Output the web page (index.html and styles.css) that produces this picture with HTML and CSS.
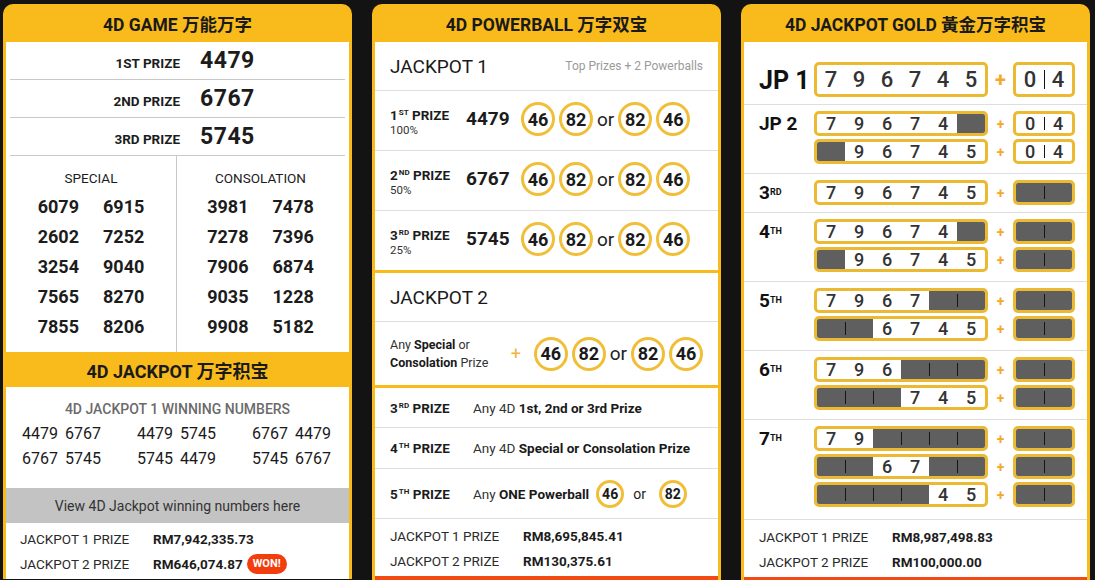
FILE: index.html
```html
<!DOCTYPE html>
<html>
<head>
<meta charset="utf-8">
<link rel="stylesheet" href="styles.css">
</head>
<body>
<div class="wrap">

  <section class="card">
    <h2 class="card-head">4D GAME 万能万字</h2>
    <div class="top-prizes">
      <div class="tp-row"><span class="tp-label">1ST PRIZE</span><span class="tp-num">4479</span></div>
      <div class="tp-row"><span class="tp-label">2ND PRIZE</span><span class="tp-num">6767</span></div>
      <div class="tp-row"><span class="tp-label">3RD PRIZE</span><span class="tp-num">5745</span></div>
    </div>
    <div class="sc">
      <div class="sc-col">
        <div class="sc-title">SPECIAL</div>
        <div class="sc-nums">
          <span>6079</span><span>6915</span>
          <span>2602</span><span>7252</span>
          <span>3254</span><span>9040</span>
          <span>7565</span><span>8270</span>
          <span>7855</span><span>8206</span>
        </div>
      </div>
      <div class="sc-col">
        <div class="sc-title">CONSOLATION</div>
        <div class="sc-nums">
          <span>3981</span><span>7478</span>
          <span>7278</span><span>7396</span>
          <span>7906</span><span>6874</span>
          <span>9035</span><span>1228</span>
          <span>9908</span><span>5182</span>
        </div>
      </div>
    </div>
    <h2 class="card-head sub">4D JACKPOT 万字积宝</h2>
    <div class="jp-win">
      <div class="jp-win-title">4D JACKPOT 1 WINNING NUMBERS</div>
      <div class="jp-grid">
        <span class="pair"><span>4479</span><span>6767</span></span>
        <span class="pair"><span>4479</span><span>5745</span></span>
        <span class="pair"><span>6767</span><span>4479</span></span>
        <span class="pair"><span>6767</span><span>5745</span></span>
        <span class="pair"><span>5745</span><span>4479</span></span>
        <span class="pair"><span>5745</span><span>6767</span></span>
      </div>
    </div>
    <div class="view-bar">View 4D Jackpot winning numbers here</div>
    <div class="jpp left">
      <div class="jpp-row"><span class="jpp-label">JACKPOT 1 PRIZE</span><span class="jpp-val">RM7,942,335.73</span></div>
      <div class="jpp-row"><span class="jpp-label">JACKPOT 2 PRIZE</span><span class="jpp-val">RM646,074.87</span><span class="won">WON!</span></div>
    </div>
  </section>

  <section class="card">
    <h2 class="card-head">4D POWERBALL 万字双宝</h2>
    <div class="stack">
      <div class="pb-sec">
        <div class="pb-title"><h3>JACKPOT 1</h3><small>Top Prizes + 2 Powerballs</small></div>
        <div class="pb-row">
          <div class="pb-label">1<sup>ST</sup> PRIZE<small>100%</small></div>
          <div class="pb-num">4479</div>
          <div class="balls"><span class="ball">46</span><span class="ball">82</span><span class="or">or</span><span class="ball">82</span><span class="ball">46</span></div>
        </div>
        <div class="pb-row">
          <div class="pb-label">2<sup>ND</sup> PRIZE<small>50%</small></div>
          <div class="pb-num">6767</div>
          <div class="balls"><span class="ball">46</span><span class="ball">82</span><span class="or">or</span><span class="ball">82</span><span class="ball">46</span></div>
        </div>
        <div class="pb-row last">
          <div class="pb-label">3<sup>RD</sup> PRIZE<small>25%</small></div>
          <div class="pb-num">5745</div>
          <div class="balls"><span class="ball">46</span><span class="ball">82</span><span class="or">or</span><span class="ball">82</span><span class="ball">46</span></div>
        </div>
      </div>
      <div class="pb-sec">
        <div class="pb-title"><h3>JACKPOT 2</h3></div>
        <div class="pb-row any">
          <div class="any-text">Any <b>Special</b> or<br><b>Consolation</b> Prize</div>
          <span class="pb-plus">+</span>
          <div class="balls"><span class="ball">46</span><span class="ball">82</span><span class="or">or</span><span class="ball">82</span><span class="ball">46</span></div>
        </div>
      </div>
      <div class="pb-sec">
        <div class="rule-row"><span class="rule-label">3<sup>RD</sup> PRIZE</span><span class="rule-text">Any 4D <b>1st, 2nd or 3rd Prize</b></span></div>
        <div class="rule-row r4"><span class="rule-label">4<sup>TH</sup> PRIZE</span><span class="rule-text">Any 4D <b>Special or Consolation Prize</b></span></div>
        <div class="rule-row r5"><span class="rule-label">5<sup>TH</sup> PRIZE</span><span class="rule-text">Any <b>ONE Powerball</b></span><span class="ball sm">46</span><span class="or sm">or</span><span class="ball sm">82</span></div>
        <div class="jpp">
          <div class="jpp-row"><span class="jpp-label">JACKPOT 1 PRIZE</span><span class="jpp-val">RM8,695,845.41</span></div>
          <div class="jpp-row"><span class="jpp-label">JACKPOT 2 PRIZE</span><span class="jpp-val">RM130,375.61</span></div>
        </div>
        <div class="red-bar"></div>
      </div>
    </div>
  </section>

  <section class="card">
    <h2 class="card-head">4D JACKPOT GOLD 黃金万字积宝</h2>
    <div class="gold">
      <div class="gr-row big">
        <span class="gr-label">JP 1</span>
        <div class="dbox"><span>7</span><span>9</span><span>6</span><span>7</span><span>4</span><span>5</span></div>
        <span class="plus">+</span>
        <div class="pbox"><span>0</span><span>4</span></div>
      </div>
      <div class="gr-row">
        <span class="gr-label jp2">JP 2</span>
        <div class="dbox"><span>7</span><span>9</span><span>6</span><span>7</span><span>4</span><span class="g"></span></div>
        <span class="plus">+</span>
        <div class="pbox"><span>0</span><span>4</span></div>
        <div class="dbox"><span class="g"></span><span>9</span><span>6</span><span>7</span><span>4</span><span>5</span></div>
        <span class="plus">+</span>
        <div class="pbox"><span>0</span><span>4</span></div>
      </div>
      <div class="gr-row one">
        <span class="gr-label">3<sup>RD</sup></span>
        <div class="dbox"><span>7</span><span>9</span><span>6</span><span>7</span><span>4</span><span>5</span></div>
        <span class="plus">+</span>
        <div class="pbox"><span class="g"></span><span class="g"></span></div>
      </div>
      <div class="gr-row">
        <span class="gr-label">4<sup>TH</sup></span>
        <div class="dbox"><span>7</span><span>9</span><span>6</span><span>7</span><span>4</span><span class="g"></span></div>
        <span class="plus">+</span>
        <div class="pbox"><span class="g"></span><span class="g"></span></div>
        <div class="dbox"><span class="g"></span><span>9</span><span>6</span><span>7</span><span>4</span><span>5</span></div>
        <span class="plus">+</span>
        <div class="pbox"><span class="g"></span><span class="g"></span></div>
      </div>
      <div class="gr-row">
        <span class="gr-label">5<sup>TH</sup></span>
        <div class="dbox"><span>7</span><span>9</span><span>6</span><span>7</span><span class="g"></span><span class="g"></span></div>
        <span class="plus">+</span>
        <div class="pbox"><span class="g"></span><span class="g"></span></div>
        <div class="dbox"><span class="g"></span><span class="g"></span><span>6</span><span>7</span><span>4</span><span>5</span></div>
        <span class="plus">+</span>
        <div class="pbox"><span class="g"></span><span class="g"></span></div>
      </div>
      <div class="gr-row">
        <span class="gr-label">6<sup>TH</sup></span>
        <div class="dbox"><span>7</span><span>9</span><span>6</span><span class="g"></span><span class="g"></span><span class="g"></span></div>
        <span class="plus">+</span>
        <div class="pbox"><span class="g"></span><span class="g"></span></div>
        <div class="dbox"><span class="g"></span><span class="g"></span><span class="g"></span><span>7</span><span>4</span><span>5</span></div>
        <span class="plus">+</span>
        <div class="pbox"><span class="g"></span><span class="g"></span></div>
      </div>
      <div class="gr-row three">
        <span class="gr-label">7<sup>TH</sup></span>
        <div class="dbox"><span>7</span><span>9</span><span class="g"></span><span class="g"></span><span class="g"></span><span class="g"></span></div>
        <span class="plus">+</span>
        <div class="pbox"><span class="g"></span><span class="g"></span></div>
        <div class="dbox"><span class="g"></span><span class="g"></span><span>6</span><span>7</span><span class="g"></span><span class="g"></span></div>
        <span class="plus">+</span>
        <div class="pbox"><span class="g"></span><span class="g"></span></div>
        <div class="dbox"><span class="g"></span><span class="g"></span><span class="g"></span><span class="g"></span><span>4</span><span>5</span></div>
        <span class="plus">+</span>
        <div class="pbox"><span class="g"></span><span class="g"></span></div>
      </div>
      <div class="jpp">
        <div class="jpp-row"><span class="jpp-label">JACKPOT 1 PRIZE</span><span class="jpp-val">RM8,987,498.83</span></div>
        <div class="jpp-row"><span class="jpp-label">JACKPOT 2 PRIZE</span><span class="jpp-val">RM100,000.00</span></div>
      </div>
      <div class="red-bar"></div>
    </div>
  </section>

</div>
</body>
</html>
```

FILE: styles.css
```css
* { box-sizing: border-box; margin: 0; padding: 0; }
html, body { background: #131313; }
body {
  font-family: Roboto, "Noto Sans CJK SC", sans-serif;
  color: #1c1c1c;
  height: 580px;
  overflow: hidden;
}
.wrap {
  display: flex;
  gap: 20px;
  padding: 4px 0 0 3px;
  align-items: flex-start;
}
.card {
  width: 349px;
  flex-shrink: 0;
  background: #f9bb1c;
  border-radius: 10px 10px 0 0;
  padding: 0 3px;
  display: flex;
  flex-direction: column;
}
.card-head {
  height: 38px;
  display: flex;
  align-items: center;
  justify-content: center;
  font-size: 17.5px;
  font-weight: 700;
  color: #1a1a1a;
}
.card-head.sub { height: 35px; font-size: 18px; }

sup {
  font-size: 8px;
  line-height: 0;
  vertical-align: 5px;
  margin-left: 1px;
}

/* ---------- left card ---------- */
.top-prizes { background: #fff; padding: 0 4px; }
.tp-row {
  height: 38px;
  display: grid;
  grid-template-columns: 170px 1fr;
  column-gap: 20px;
  align-items: center;
  border-bottom: 1px solid #c9c9c9;
}
.tp-label { text-align: right; font-size: 13.5px; font-weight: 700; padding-top: 4px; }
.tp-num { font-size: 23px; font-weight: 700; letter-spacing: 0.5px; }

.sc {
  background: #fff;
  height: 196px;
  display: grid;
  grid-template-columns: 170px 1fr;
}
.sc-col + .sc-col { border-left: 1px solid #c9c9c9; padding-right: 5px; }
.sc-title { text-align: center; font-size: 13.5px; line-height: 20px; padding-top: 12px; }
.sc-nums {
  margin-top: 3px;
  display: grid;
  grid-template-columns: auto auto;
  justify-content: center;
  column-gap: 24px;
  grid-auto-rows: 30px;
  align-items: center;
  font-size: 18px;
  font-weight: 700;
}

.jp-win { background: #fff; padding: 12px 0 17px 16px; }
.jp-win-title {
  text-align: center;
  margin-left: -16px;
  font-size: 14px;
  font-weight: 500;
  line-height: 20px;
  color: #6b6b6b;
  margin-bottom: 2px;
}
.jp-grid {
  display: grid;
  grid-template-columns: 115px 115px 115px;
  grid-auto-rows: 25px;
  align-items: center;
  font-size: 16px;
  color: #1a1a1a;
}
.pair { display: flex; gap: 7px; }

.view-bar {
  height: 35px;
  background: #c3c3c3;
  display: flex;
  align-items: center;
  justify-content: center;
  font-size: 14px;
  color: #333;
}

.jpp { background: #fff; padding: 4px 15px 3px; }
.jpp.left { padding: 3px 14px 3px; }
.jpp-row { height: 25px; display: flex; align-items: center; font-size: 13.5px; }
.jpp-label { width: 133px; color: #2a2a2a; }
.jpp-val { font-weight: 700; }
.won {
  margin-left: 4px;
  background: #f23d0c;
  color: #fff;
  font-weight: 700;
  font-size: 11px;
  height: 20px;
  padding: 0 6px;
  border-radius: 10px;
  display: flex;
  align-items: center;
}

/* ---------- middle card ---------- */
.stack { display: flex; flex-direction: column; gap: 3px; }
.pb-sec { background: #fff; }
.pb-title {
  height: 49px;
  padding: 0 15px;
  display: flex;
  align-items: center;
  justify-content: space-between;
  border-bottom: 1px solid #dedede;
}
.pb-title h3 { font-size: 19px; font-weight: 400; color: #1a1a1a; }
.pb-title small { font-size: 12px; color: #9a9a9a; }
.pb-row {
  height: 60px;
  padding: 0 15px 3px;
  display: flex;
  align-items: center;
  border-bottom: 1px solid #dedede;
}
.pb-row.last { height: 59px; border-bottom: 0; }
.pb-label { width: 76px; font-size: 13.5px; font-weight: 700; line-height: 15px; padding-top: 6px; }
.pb-label small { display: block; font-size: 11.5px; font-weight: 400; line-height: 14px; color: #333; }
.pb-num { width: 55px; font-size: 19px; font-weight: 700; padding-bottom: 2px; }
.balls { display: flex; align-items: center; gap: 4px; }
.ball {
  width: 34px;
  height: 34px;
  border: 3px solid #f0be37;
  border-radius: 50%;
  display: flex;
  align-items: center;
  justify-content: center;
  font-size: 18px;
  font-weight: 700;
  color: #1a1a1a;
}
.or { font-size: 19px; color: #222; }
.pb-row.any { height: 63px; padding-bottom: 0; border-bottom: 0; }
.any-text { width: 116px; font-size: 12.5px; line-height: 18px; color: #333; }
.any-text b { color: #1a1a1a; }
.pb-plus { width: 20px; margin-right: 8px; text-align: center; color: #f4b43a; font-size: 18px; }

.rule-row {
  height: 40px;
  padding: 0 15px;
  display: flex;
  align-items: center;
  border-bottom: 1px solid #dedede;
}
.rule-row.r4 { height: 41px; }
.rule-row.r5 { height: 50px; }
.rule-label { width: 83px; font-size: 13.5px; font-weight: 700; }
.rule-text { font-size: 13.5px; color: #333; }
.rule-text b { color: #1a1a1a; }
.ball.sm { width: 28px; height: 28px; font-size: 14px; margin-left: 7px; }
.or.sm { font-size: 14px; margin: 0 6px 0 9px; }

.red-bar { height: 24px; background: #f24a12; }

/* ---------- right card ---------- */
.gold { background: #fff; }
.gr-row {
  display: grid;
  grid-template-columns: 55px 174px 25px 62px;
  grid-auto-rows: 25px;
  row-gap: 3px;
  padding: 6px 0 9px 15px;
  border-bottom: 1px solid #dedede;
}
.gr-row.one { padding-bottom: 7px; }
.gr-row.three { padding-bottom: 12px; }
.gr-row.big { grid-auto-rows: 35px; padding: 20px 0 7px 15px; }
.gr-label {
  grid-column: 1;
  font-size: 19px;
  font-weight: 700;
  line-height: 25px;
  color: #111;
}
.gr-label sup { font-size: 9px; vertical-align: 4px; margin-left: 0; }
.gr-row.big .gr-label { font-size: 25px; line-height: 37px; }
.gr-label.jp2 { font-size: 19px; }
.dbox, .pbox {
  display: flex;
  border: 3px solid #ecb932;
  border-radius: 5px;
  overflow: hidden;
  background: #fff;
}
.dbox { grid-column: 2; }
.pbox { grid-column: 4; }
.plus {
  grid-column: 3;
  display: flex;
  align-items: center;
  justify-content: center;
  color: #f5a829;
  font-weight: 700;
  font-size: 14px;
}
.gr-row.big .plus { font-size: 20px; }
.dbox span, .pbox span {
  width: 28px;
  position: relative;
  display: flex;
  align-items: center;
  justify-content: center;
  font-size: 18px;
  font-weight: 500;
  color: #333;
}
.gr-row.big .dbox span, .gr-row.big .pbox span { font-size: 22px; }
.dbox .g, .pbox .g { background: #5f5f5f; }
.dbox .g + .g::before,
.pbox span + span::before {
  content: "";
  position: absolute;
  left: 0;
  top: 16%;
  bottom: 16%;
  width: 1px;
  background: #151515;
}
```
